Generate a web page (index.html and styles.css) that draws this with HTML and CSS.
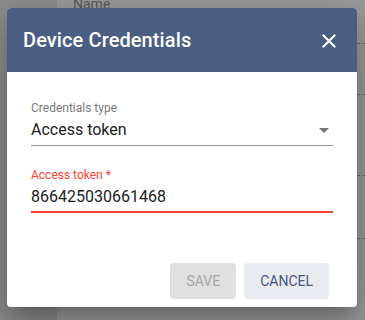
FILE: index.html
```html
<!DOCTYPE html>
<html>
<head>
<meta charset="utf-8">
<link rel="stylesheet" href="styles.css">
</head>
<body>
<div class="page">
  <div class="side"></div>
  <div class="main">
    <div class="col-name">Name</div>
    <div class="dash d1"></div>
    <div class="dash d2"></div>
    <div class="dash d3"></div>
    <div class="dash d4"></div>
  </div>
</div>
<div class="dialog">
  <div class="header">
    <h2 class="title">Device Credentials</h2>
    <svg class="close" width="24" height="24" viewBox="0 0 24 24"><path d="M19 6.41L17.59 5 12 10.59 6.41 5 5 6.41 10.59 12 5 17.59 6.41 19 12 13.41 17.59 19 19 17.59 13.41 12z" fill="#fff"/></svg>
  </div>
  <div class="content">
    <div class="field">
      <div class="label">Credentials type</div>
      <div class="value-row">
        <span class="value">Access token</span>
        <span class="arrow"></span>
      </div>
      <div class="line"></div>
    </div>
    <div class="field field2">
      <div class="label error">Access token *</div>
      <div class="value-row">
        <span class="value">866425030661468</span>
      </div>
      <div class="line error-line"></div>
    </div>
  </div>
  <div class="actions">
    <button class="btn save" disabled>Save</button>
    <button class="btn cancel">Cancel</button>
  </div>
</div>
</body>
</html>
```
FILE: styles.css
```css
html, body {
  margin: 0;
  padding: 0;
  width: 365px;
  height: 320px;
  overflow: hidden;
  font-family: Roboto, "Liberation Sans", sans-serif;
}
.page {
  display: flex;
  width: 365px;
  height: 320px;
}
.side {
  width: 57px;
  background: #8d8d8d;
}
.main {
  flex: 1;
  background: #9b9b9b;
  position: relative;
}
.col-name {
  position: absolute;
  left: 16px;
  top: -4px;
  font-size: 14px;
  line-height: 16px;
  color: #5c5c5c;
}
.dash {
  position: absolute;
  right: 0;
  width: 8px;
  border-top: 1px dashed #666;
}
.d1 { top: 43px; }
.d2 { top: 94px; }
.d3 { top: 175px; }
.d4 { top: 238px; }
.dialog {
  position: absolute;
  left: 7px;
  top: 8px;
  width: 350px;
  height: 299px;
  background: #fff;
  border-radius: 4px;
  overflow: hidden;
  box-shadow: 0 11px 15px -7px rgba(0,0,0,.2), 0 24px 38px 3px rgba(0,0,0,.14), 0 9px 46px 8px rgba(0,0,0,.12);
  display: flex;
  flex-direction: column;
}
.header {
  height: 64px;
  background: #4a5e82;
  display: flex;
  align-items: center;
  justify-content: space-between;
  padding: 0 16px;
}
.title {
  margin: 0;
  color: #fff;
  font-size: 20px;
  font-weight: 500;
  letter-spacing: 0.1px;
}
.close {
  display: block;
  margin-top: 1px;
}
.content {
  padding: 29px 24px 0 24px;
}
.label {
  font-size: 12px;
  line-height: 14px;
  color: #7a7a7a;
}
.label.error {
  color: #f44336;
}
.value-row {
  display: flex;
  align-items: center;
  justify-content: space-between;
  margin-top: 5px;
  height: 20px;
}
.value {
  font-size: 16px;
  line-height: 20px;
  color: #212121;
}
.arrow {
  width: 0;
  height: 0;
  border-left: 5px solid transparent;
  border-right: 5px solid transparent;
  border-top: 5px solid #757575;
  margin-right: 4px;
}
.line {
  height: 1px;
  background: #949494;
  margin-top: 5px;
}
.field2 {
  margin-top: 22px;
}
.error-line {
  height: 2px;
  background: #f44336;
  margin-top: 4px;
}
.actions {
  margin-top: auto;
  display: flex;
  justify-content: flex-end;
  gap: 8px;
  padding: 0 28px 8px 0;
}
.btn {
  height: 36px;
  border: none;
  border-radius: 4px;
  padding: 0 16px;
  font-family: Roboto, "Liberation Sans", sans-serif;
  font-size: 14px;
  font-weight: 400;
  text-transform: uppercase;
  letter-spacing: 0;
}
.save {
  background: #e0e0e0;
  color: #a8a8a8;
}
.cancel {
  background: #e8ebf0;
  color: #475a7c;
}
```
